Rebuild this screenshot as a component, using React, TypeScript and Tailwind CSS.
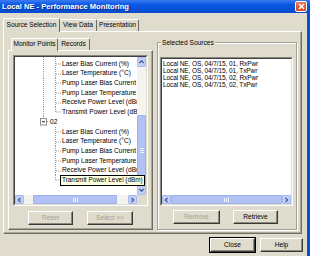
import React from "react";

const FONT = "font-['Liberation_Sans',Arial,sans-serif]";

type Dir = "up" | "down" | "left" | "right";

function Chevron({ dir }: { dir: Dir }) {
  const paths: Record<Dir, string> = {
    up: "M1.5 5.2 L4 2.7 L6.5 5.2",
    down: "M1.5 2.8 L4 5.3 L6.5 2.8",
    left: "M5.2 1.5 L2.7 4 L5.2 6.5",
    right: "M2.8 1.5 L5.3 4 L2.8 6.5",
  };
  return (
    <svg width="8" height="8" viewBox="0 0 8 8">
      <path d={paths[dir]} fill="none" stroke="#3d5288" strokeWidth="1.4" />
    </svg>
  );
}

function ArrowBtn({ dir, className }: { dir: Dir; className: string }) {
  return (
    <div
      className={`flex items-center justify-center rounded-[1px] bg-[#c2d0f8] border border-[#a9bbef] ${className}`}
    >
      <Chevron dir={dir} />
    </div>
  );
}

function Btn({
  children,
  w,
  disabled,
  def,
}: {
  children: React.ReactNode;
  w: string;
  disabled?: boolean;
  def?: boolean;
}) {
  return (
    <div
      className={`h-[14px] ${w} flex items-center justify-center text-[6.6px] bg-[#e0dccd] border border-t-white border-l-white border-r-[#3a3a3a] border-b-[#3a3a3a] shadow-[inset_-1px_-1px_0_#8c897c] ${
        disabled ? "text-[#a3a095]" : "text-black"
      } ${def ? "outline outline-1 outline-black" : ""}`}
    >
      {children}
    </div>
  );
}

const GROUP = [
  "Laser Bias Current (%)",
  "Laser Temperature (°C)",
  "Pump Laser Bias Current",
  "Pump Laser Temperature",
  "Receive Power Level (dBm)",
  "Transmit Power Level (dBm)",
];

type Row = { kind: "c1" | "node" | "c2"; label: string; last?: boolean };

const ROWS: Row[] = [
  { kind: "c1", label: "" },
  ...GROUP.map((l, i) => ({ kind: "c1" as const, label: l, last: i === 5 })),
  { kind: "node", label: "02" },
  ...GROUP.map((l, i) => ({ kind: "c2" as const, label: l, last: i === 5 })),
];

const LINE = { stroke: "#9c9c9c", strokeWidth: 1, strokeDasharray: "1 1" };

function TreeRow({ row }: { row: Row }) {
  if (row.kind === "node") {
    return (
      <div className="flex h-[9.7px] items-center">
        <svg width="35" height="10" viewBox="0 0 35 10" className="shrink-0 overflow-visible">
          <line x1="28.5" y1="-1" x2="28.5" y2="1.5" {...LINE} />
          <rect x="25.5" y="1.5" width="6" height="6.5" fill="white" stroke="#8e8e8e" strokeWidth="1" />
          <line x1="27" y1="4.75" x2="30" y2="4.75" stroke="#202020" strokeWidth="1" />
          <line x1="32" y1="4.5" x2="34.5" y2="4.5" {...LINE} />
        </svg>
        <span className="text-[6.6px] leading-none whitespace-nowrap">{row.label}</span>
      </div>
    );
  }
  return (
    <div className="flex h-[9.7px] items-center">
      <svg width="47" height="10" viewBox="0 0 47 10" className="shrink-0 overflow-visible">
        {row.kind === "c1" && <line x1="28.5" y1="0" x2="28.5" y2="10" {...LINE} />}
        <line x1="40.5" y1="0" x2="40.5" y2={row.last ? 5 : 10} {...LINE} />
        <line x1="41" y1="5" x2="46" y2="5" {...LINE} />
      </svg>
      <span className="text-[6.6px] leading-none whitespace-nowrap">{row.label}</span>
    </div>
  );
}

function Tree() {
  return (
    <div className="relative w-[135px] h-[151px] border border-t-[#8a877c] border-l-[#8a877c] border-r-white border-b-white">
      <div className="w-full h-full border border-t-[#404040] border-l-[#404040] border-r-[#e0dccd] border-b-[#e0dccd] bg-white flex flex-col">
        <div className="flex h-[138px]">
          <div className="w-[122px] h-full overflow-hidden">
            <div className="mt-[-7.5px]">
              {ROWS.map((r, i) => (
                <TreeRow key={i} row={r} />
              ))}
            </div>
          </div>
          {/* vertical scrollbar */}
          <div className="w-[9px] h-full flex flex-col bg-[#f4f3ee]">
            <ArrowBtn dir="up" className="h-[10px] w-[9px]" />
            <div className="h-[48px]" />
            <div className="h-[70px] w-[9px] rounded-[1px] bg-[#b2c2f4] border border-[#9db1ec] flex flex-col items-center justify-center gap-[1px]">
              <div className="w-[4px] h-px bg-[#eef2fd]" />
              <div className="w-[4px] h-px bg-[#eef2fd]" />
              <div className="w-[4px] h-px bg-[#eef2fd]" />
            </div>
            <ArrowBtn dir="down" className="h-[10px] w-[9px]" />
          </div>
        </div>
        {/* horizontal scrollbar */}
        <div className="flex h-[9px]">
          <div className="w-[122px] flex bg-[#f4f3ee]">
            <ArrowBtn dir="left" className="w-[9px] h-[9px]" />
            <div className="w-[9px]" />
            <div className="w-[84px] h-[9px] rounded-[1px] bg-[#b2c2f4] border border-[#9db1ec] flex items-center justify-center gap-[1px]">
              <div className="h-[4px] w-px bg-[#eef2fd]" />
              <div className="h-[4px] w-px bg-[#eef2fd]" />
              <div className="h-[4px] w-px bg-[#eef2fd]" />
            </div>
            <div className="w-[11px]" />
            <ArrowBtn dir="right" className="w-[9px] h-[9px]" />
          </div>
          <div className="w-[9px] bg-[#e0dccd]" />
        </div>
      </div>
      {/* tooltip */}
      <div className="absolute z-20 left-[46px] top-[119px] h-[11px] bg-[#ffffe1] border border-black flex items-center px-[1px] text-[6.4px] leading-none whitespace-nowrap">
        <span>Transmit Power Level (dBm)</span>
      </div>
    </div>
  );
}

const SOURCES = [
  "Local NE, OS, 04/7/15, 01, RxPwr",
  "Local NE, OS, 04/7/15, 01, TxPwr",
  "Local NE, OS, 04/7/15, 02, RxPwr",
  "Local NE, OS, 04/7/15, 02, TxPwr",
];

function ListBox() {
  return (
    <div className="w-[133px] h-[149px] border border-t-[#8a877c] border-l-[#8a877c] border-r-white border-b-white">
      <div className="w-full h-full border border-t-[#404040] border-l-[#404040] border-r-[#e0dccd] border-b-[#e0dccd] bg-white flex flex-col">
        <div className="flex-1 pt-[1.5px] pl-[1px]">
          {SOURCES.map((s) => (
            <div key={s} className="h-[7px] flex items-center text-[6.5px] leading-none whitespace-nowrap tracking-[-0.1px]">
              {s}
            </div>
          ))}
        </div>
        <div className="flex h-[9px] bg-[#f4f3ee]">
          <ArrowBtn dir="left" className="w-[9px] h-[9px]" />
          <div className="flex-1 h-[9px] rounded-[1px] bg-[#b2c2f4] border border-[#9db1ec] flex items-center justify-center gap-[1px]">
            <div className="h-[4px] w-px bg-[#eef2fd]" />
            <div className="h-[4px] w-px bg-[#eef2fd]" />
            <div className="h-[4px] w-px bg-[#eef2fd]" />
          </div>
          <ArrowBtn dir="right" className="w-[9px] h-[9px]" />
        </div>
      </div>
    </div>
  );
}

export default function App() {
  return (
    <div className={`w-[310px] h-[256px] overflow-hidden bg-[#e0dccd] flex flex-col text-black ${FONT}`}>
      {/* title bar */}
      <div className="h-[13px] shrink-0 flex items-center justify-between bg-[linear-gradient(to_bottom,#3b7cf2_0%,#0c57e4_35%,#0650d8_70%,#0a4bc8_100%)]">
        <span className="ml-[2px] text-white font-bold text-[7.6px] leading-none whitespace-nowrap [text-shadow:1px_1px_0_#0a2f8c]">
          Local NE - Performance Monitoring
        </span>
        <div className="mr-[3px] w-[12px] h-[11px] rounded-[2px] border border-white bg-[linear-gradient(to_bottom,#e8795a,#d4471c)] flex items-center justify-center">
          <svg width="7" height="7" viewBox="0 0 7 7">
            <path d="M1 1 L6 6 M6 1 L1 6" stroke="white" strokeWidth="1.5" />
          </svg>
        </div>
      </div>

      <div className="flex flex-1">
        <div className="flex-1 flex flex-col pl-[3px]">
          {/* outer tabs */}
          <div className="mt-[4px] h-[14px] flex items-end relative z-10">
            <div className="h-[14px] w-[57px] mb-[-1px] bg-[#e0dccd] border-t border-l border-white border-r border-r-[#6f6c61] rounded-t-[2px] flex items-center justify-center text-[6.6px] leading-none whitespace-nowrap pb-[1px]">
              Source Selection
            </div>
            <div className="h-[12px] w-[37px] border-t border-white border-r border-r-[#6f6c61] rounded-t-[2px] flex items-center justify-center text-[6.6px] leading-none whitespace-nowrap">
              View Data
            </div>
            <div className="h-[12px] w-[42px] border-t border-white border-r border-r-[#6f6c61] rounded-t-[2px] flex items-center justify-center text-[6.6px] leading-none whitespace-nowrap">
              Presentation
            </div>
          </div>
          {/* outer panel */}
          <div className="w-[299px] h-[203px] border border-t-white border-l-white border-r-[#6f6c61] border-b-[#6f6c61] shadow-[inset_-1px_-1px_0_#a9a69a] pl-[4px] pt-[5px] flex gap-[4px]">
            {/* left inner tab control */}
            <div className="w-[145px] flex flex-col">
              <div className="h-[13px] flex items-end pl-[3px] relative z-10">
                <div className="h-[13px] w-[47px] mb-[-1px] bg-[#e0dccd] border-t border-l border-white border-r border-r-[#6f6c61] rounded-t-[2px] flex items-center justify-center text-[6.6px] leading-none whitespace-nowrap pb-[1px]">
                  Monitor Points
                </div>
                <div className="h-[12px] w-[32px] border-t border-white border-r border-r-[#6f6c61] rounded-t-[2px] flex items-center justify-center text-[6.6px] leading-none whitespace-nowrap">
                  Records
                </div>
              </div>
              <div className="h-[180px] border border-t-white border-l-white border-r-[#6f6c61] border-b-[#6f6c61] shadow-[inset_-1px_-1px_0_#a9a69a] pl-[4px] pt-[4px] flex flex-col">
                <Tree />
                <div className="mt-[5px] flex pl-[15px] gap-[14px]">
                  <Btn w="w-[45px]" disabled>
                    Reset
                  </Btn>
                  <Btn w="w-[46px]" disabled>
                    Select &gt;&gt;
                  </Btn>
                </div>
              </div>
            </div>
            {/* selected sources group */}
            <div className="relative mt-[5px] w-[140px] h-[188px] border border-[#a4a194] shadow-[inset_1px_1px_0_white,1px_1px_0_white] pl-[2px] pt-[14px] flex flex-col">
              <span className="absolute left-[3px] top-[-5px] px-[1px] bg-[#e0dccd] text-[6.6px] leading-[9px] whitespace-nowrap">
                Selected Sources
              </span>
              <ListBox />
              <div className="mt-[4px] flex pl-[13px] gap-[13px]">
                <Btn w="w-[47px]" disabled>
                  Remove
                </Btn>
                <Btn w="w-[45px]">Retrieve</Btn>
              </div>
            </div>
          </div>
          {/* bottom buttons */}
          <div className="mt-[4px] flex justify-end pr-[4px] gap-[5px]">
            <Btn w="w-[45px]" def>
              Close
            </Btn>
            <Btn w="w-[43px]">Help</Btn>
          </div>
        </div>
        <div className="w-[3px] bg-[#0a4fd6]" />
      </div>
    </div>
  );
}
